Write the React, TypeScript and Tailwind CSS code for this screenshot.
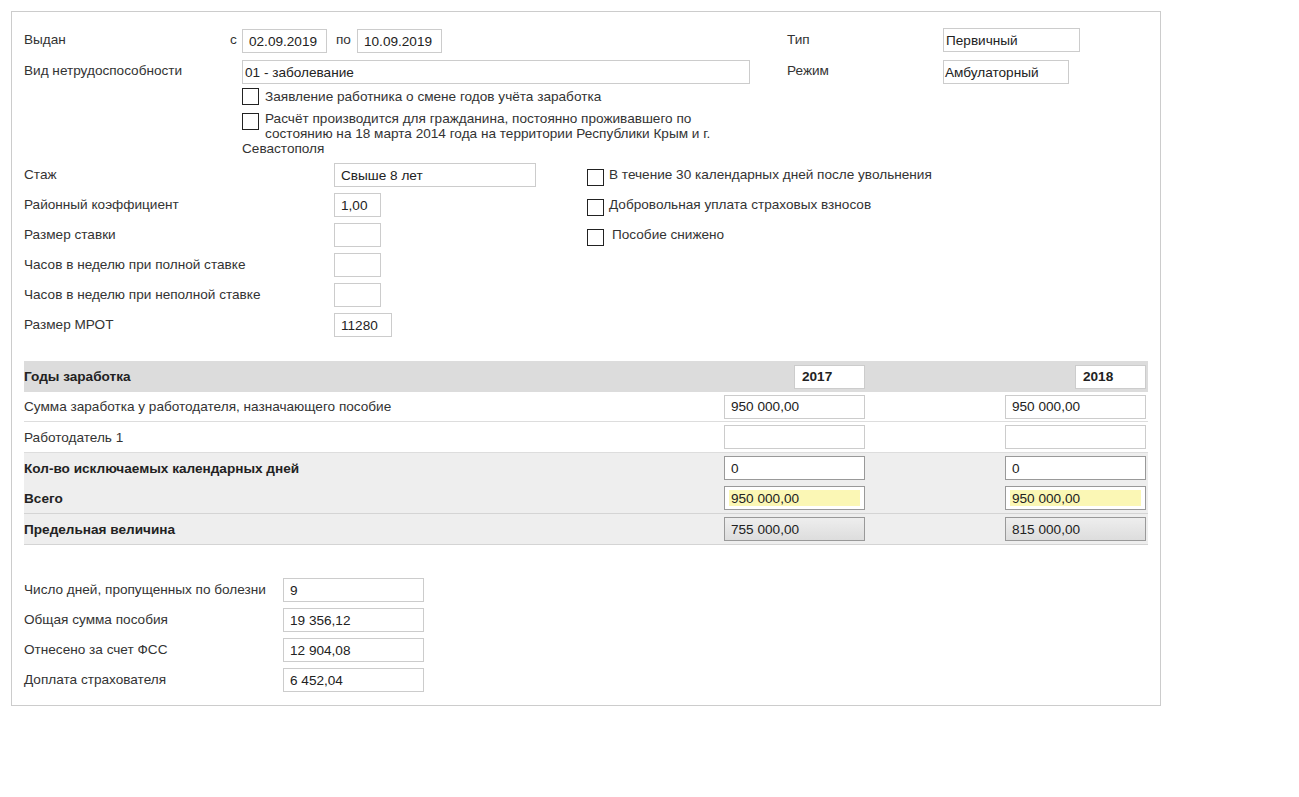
import React from 'react'

type BoxProps = {
  w: string
  children?: React.ReactNode
  pad?: string
  tone?: 'light' | 'dark' | 'limit'
  bold?: boolean
}

function Box({ w, children, pad = 'px-[6px]', tone = 'light', bold }: BoxProps) {
  const toneCls =
    tone === 'light'
      ? 'border-[#cccccc] bg-white'
      : tone === 'dark'
        ? 'border-[#999999] bg-white'
        : 'border-[#999999] bg-gradient-to-b from-[#eeeeee] to-[#dddddd]'
  return (
    <div
      className={`${w} ${pad} ${toneCls} ${bold ? 'font-bold' : ''} h-[24px] shrink-0 border flex items-center text-[#222] whitespace-nowrap`}
    >
      {children}
    </div>
  )
}

function Check() {
  return <div className="w-[17px] h-[17px] shrink-0 border border-[#222] bg-white" />
}

const leftRows: { label: string; w: string; value: string }[] = [
  { label: 'Стаж', w: 'w-[202px]', value: 'Свыше 8 лет' },
  { label: 'Районный коэффициент', w: 'w-[47px]', value: '1,00' },
  { label: 'Размер ставки', w: 'w-[47px]', value: '' },
  { label: 'Часов в неделю при полной ставке', w: 'w-[47px]', value: '' },
  { label: 'Часов в неделю при неполной ставке', w: 'w-[47px]', value: '' },
  { label: 'Размер МРОТ', w: 'w-[58px]', value: '11280' },
]

const results = [
  ['Число дней, пропущенных по болезни', '9'],
  ['Общая сумма пособия', '19 356,12'],
  ['Отнесено за счет ФСС', '12 904,08'],
  ['Доплата страхователя', '6 452,04'],
]

export default function App() {
  return (
    <div className="min-h-screen bg-white font-['Liberation_Sans',Arial,sans-serif] text-[13.6px] leading-[15px] text-[#333]">
      <div className="ml-[11px] pt-[11px]">
        <div className="w-[1150px] border border-[#cccccc] pt-[17px] pb-[13px] px-[12px]">
          {/* Выдан / Тип */}
          <div className="flex items-start">
            <div className="w-[206px] pt-[3px]">Выдан</div>
            <div className="w-[12px] pt-[3px]">с</div>
            <Box w="w-[85px]">02.09.2019</Box>
            <div className="w-[30px] pl-[9px] pt-[3px]">по</div>
            <Box w="w-[85px]">10.09.2019</Box>
            <div className="w-[156px] ml-[345px] pt-[3px]">Тип</div>
            <div className="-mt-[1px]">
              <Box w="w-[137px]" pad="px-[2px]">Первичный</Box>
            </div>
          </div>

          {/* Вид нетрудоспособности / Режим */}
          <div className="flex items-start mt-[7px]">
            <div className="w-[218px] pt-[3px]">Вид нетрудоспособности</div>
            <Box w="w-[508px]" pad="px-[2px]">01 - заболевание</Box>
            <div className="w-[156px] ml-[37px] pt-[3px]">Режим</div>
            <Box w="w-[126px]" pad="px-[1px]">Амбулаторный</Box>
          </div>

          <div className="ml-[218px] w-[508px]">
            <div className="flex items-center mt-[4px]">
              <Check />
              <span className="ml-[6px]">Заявление работника о смене годов учёта заработка</span>
            </div>
            <div className="mt-[6px]">
              <div className="float-left mt-[2px] mr-[6px] mb-[4px]">
                <Check />
              </div>
              Расчёт производится для гражданина, постоянно проживавшего по
              <br />
              состоянию на 18 марта 2014 года на территории Республики Крым и г.
              <br />
              Севастополя
              <div className="clear-both" />
            </div>
          </div>

          {/* Стаж и флажки */}
          <div className="flex mt-[7px]">
            <div className="w-[563px] flex flex-col gap-[6px]">
              {leftRows.map((r) => (
                <div key={r.label} className="flex items-start">
                  <div className="w-[310px] pt-[4px]">{r.label}</div>
                  <Box w={r.w}>{r.value}</Box>
                </div>
              ))}
            </div>
            <div className="flex flex-col">
              {[
                ['В течение 30 календарных дней после увольнения', 'ml-[5px]'],
                ['Добровольная уплата страховых взносов', 'ml-[5px]'],
                ['Пособие снижено', 'ml-[8px]'],
              ].map(([t, m]) => (
                <div key={t} className="flex items-start h-[30px]">
                  <div className="mt-[6px]">
                    <Check />
                  </div>
                  <span className={`${m} pt-[4px]`}>{t}</span>
                </div>
              ))}
            </div>
          </div>

          {/* Годы заработка */}
          <div className="mt-[24px] w-[1124px] text-[#222]">
            <div className="grid grid-cols-[700px_141px_140px_141px] items-center h-[31px] bg-[#dcdcdc]">
              <div className="font-bold">Годы заработка</div>
              <div className="flex justify-end">
                <Box w="w-[71px]" pad="px-[7px]" bold>
                  2017
                </Box>
              </div>
              <div />
              <div className="flex justify-end">
                <Box w="w-[71px]" pad="px-[7px]" bold>
                  2018
                </Box>
              </div>
            </div>

            <div className="grid grid-cols-[700px_141px_140px_141px] items-center h-[30px] border-b border-[#dddddd] text-[#333]">
              <div>Сумма заработка у работодателя, назначающего пособие</div>
              <Box w="w-[141px]">950 000,00</Box>
              <div />
              <Box w="w-[141px]">950 000,00</Box>
            </div>

            <div className="grid grid-cols-[700px_141px_140px_141px] items-center h-[31px] border-b border-[#dddddd] text-[#333]">
              <div>Работодатель 1</div>
              <Box w="w-[141px]" />
              <div />
              <Box w="w-[141px]" />
            </div>

            <div className="bg-[#eeeeee]">
              <div className="grid grid-cols-[700px_141px_140px_141px] items-center h-[30px]">
                <div className="font-bold">Кол-во исключаемых календарных дней</div>
                <Box w="w-[141px]" tone="dark">0</Box>
                <div />
                <Box w="w-[141px]" tone="dark">0</Box>
              </div>
              <div className="grid grid-cols-[700px_141px_140px_141px] items-center h-[31px] border-b border-[#d4d4d4]">
                <div className="font-bold">Всего</div>
                {[0, 1].map((i) => (
                  <React.Fragment key={i}>
                    <div className="w-[141px] h-[24px] border border-[#999999] bg-white px-[4px] py-[3px]">
                      <div className="h-full bg-[#fbf7b5] px-[2px] flex items-center">950 000,00</div>
                    </div>
                    {i === 0 && <div />}
                  </React.Fragment>
                ))}
              </div>
              <div className="grid grid-cols-[700px_141px_140px_141px] items-center h-[31px] border-b border-[#d4d4d4]">
                <div className="font-bold">Предельная величина</div>
                <Box w="w-[141px]" tone="limit">755 000,00</Box>
                <div />
                <Box w="w-[141px]" tone="limit">815 000,00</Box>
              </div>
            </div>
          </div>

          {/* Итоги */}
          <div className="mt-[33px] flex flex-col gap-[6px]">
            {results.map(([l, v]) => (
              <div key={l} className="flex items-start">
                <div className="w-[259px] pt-[4px]">{l}</div>
                <Box w="w-[141px]">{v}</Box>
              </div>
            ))}
          </div>
        </div>
      </div>
    </div>
  )
}
